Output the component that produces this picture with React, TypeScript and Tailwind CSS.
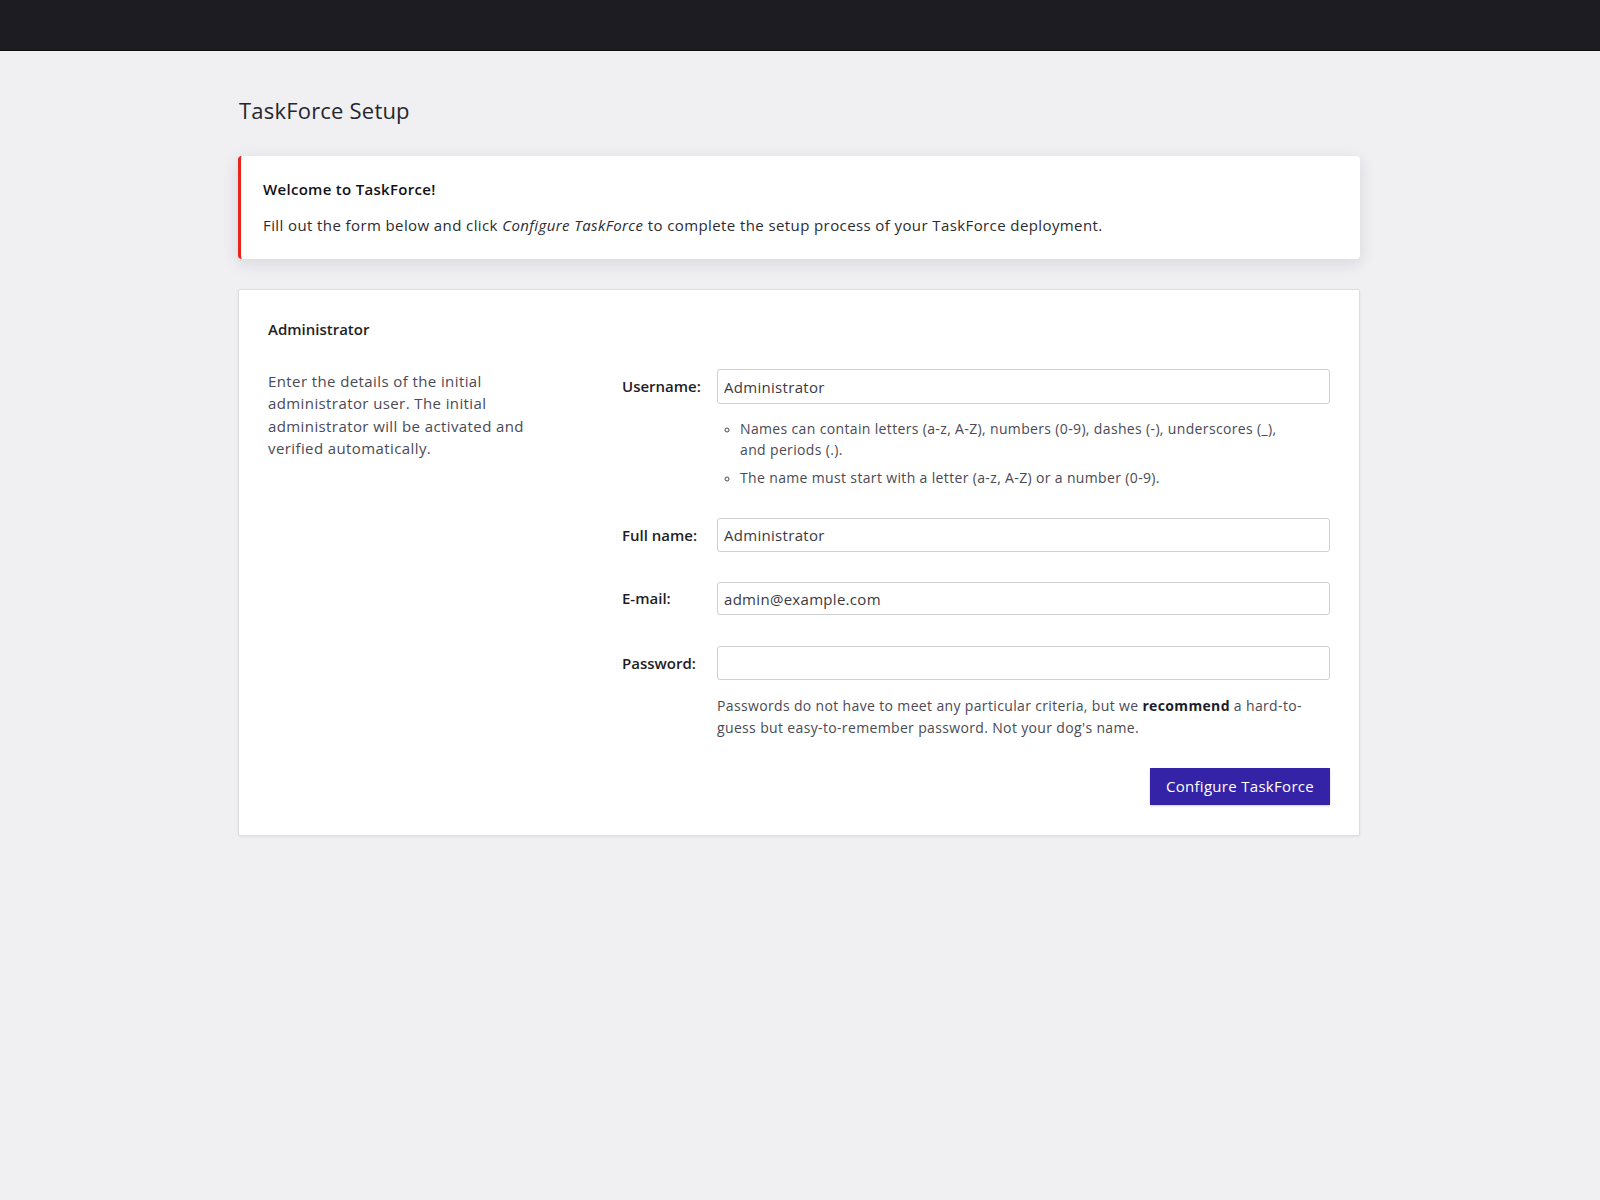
export default function App() {
  const font = { fontFamily: "'Open Sans', 'Noto Sans', sans-serif" };

  return (
    <div className="min-h-screen w-full bg-[#f0f0f3] text-[#2b2b33]" style={font}>
      <div className="h-[51px] w-full bg-[#1c1c22] border-b border-[#0d0d10]" />

      <main className="w-[1122px] ml-[238px] pt-[44px]">
        <h1 className="text-[22px] font-normal text-[#26262e] leading-[30px] mb-[31px] pl-[1px] tracking-[0.2px]">TaskForce Setup</h1>

        <div className="bg-white rounded-[4px] border-l-[3px] border-[#e8231a] shadow-[0_4px_16px_rgba(30,30,60,0.12)] px-[22px] pt-[21px] pb-[22px] mb-[30px]">
          <h2 className="text-[15px] font-semibold text-[#111118] leading-[24px] mb-[12px] tracking-[0.3px]">Welcome to TaskForce!</h2>
          <p className="text-[15px] text-[#2b2b33] leading-[24px] tracking-[0.4px]">
            Fill out the form below and click <em>Configure TaskForce</em> to complete the setup process of your TaskForce deployment.
          </p>
        </div>

        <section className="bg-white border border-[#dcdce2] rounded-[2px] shadow-[0_1px_3px_rgba(0,0,0,0.06)] px-[29px] pt-[27px] pb-[30px]">
          <h3 className="text-[15px] font-semibold text-[#1e1e26] leading-[24px] mb-[28px]">Administrator</h3>

          <div className="grid grid-cols-3">
            <p className="text-[15px] leading-[22.4px] text-[#4a4a55] pr-[80px] pt-[1px] tracking-[0.4px]">
              Enter the details of the initial administrator user. The initial administrator will be activated and verified automatically.
            </p>

            <div className="col-span-2 flex flex-col">
              <div className="flex items-center">
                <label className="w-[95px] text-[15px] font-semibold text-[#1e1e26]">Username:</label>
                <input
                  defaultValue="Administrator"
                  className="flex-1 h-[35px] border border-[#cfcfd6] rounded-[3px] px-[6px] text-[15px] text-[#3a3a44] outline-none tracking-[0.3px]"
                  style={font}
                />
              </div>
              <ul className="ml-[95px] mt-[14px] pl-[23px] pr-[45px] list-[circle] text-[14px] leading-[21px] text-[#4a4a55] marker:text-[12px] tracking-[0.35px]">
                <li className="mb-[7px]">Names can contain letters (a-z, A-Z), numbers (0-9), dashes (-), underscores (_), and periods (.).</li>
                <li>The name must start with a letter (a-z, A-Z) or a number (0-9).</li>
              </ul>

              <div className="flex items-center mt-[30px]">
                <label className="w-[95px] text-[15px] font-semibold text-[#1e1e26]">Full name:</label>
                <input
                  defaultValue="Administrator"
                  className="flex-1 h-[34px] border border-[#cfcfd6] rounded-[3px] px-[6px] text-[15px] text-[#3a3a44] outline-none tracking-[0.3px]"
                  style={font}
                />
              </div>

              <div className="flex items-center mt-[30px]">
                <label className="w-[95px] text-[15px] font-semibold text-[#1e1e26]">E-mail:</label>
                <input
                  defaultValue="admin@example.com"
                  className="flex-1 h-[33px] border border-[#cfcfd6] rounded-[3px] px-[6px] text-[15px] text-[#3a3a44] outline-none tracking-[0.3px]"
                  style={font}
                />
              </div>

              <div className="flex items-center mt-[31px]">
                <label className="w-[95px] text-[15px] font-semibold text-[#1e1e26]">Password:</label>
                <input
                  type="password"
                  className="flex-1 h-[34px] border border-[#cfcfd6] rounded-[3px] px-[6px] text-[15px] outline-none"
                />
              </div>
              <p className="ml-[95px] mt-[15px] text-[14px] leading-[21.5px] text-[#4a4a55] pr-[10px] tracking-[0.35px]">
                Passwords do not have to meet any particular criteria, but we <strong className="font-bold text-[#1e1e26]">recommend</strong> a hard-to-guess but easy-to-remember password. Not your dog's name.
              </p>

              <div className="flex justify-end mt-[30px]">
                <button className="h-[37px] w-[180px] bg-[#3423a6] text-white text-[15px] tracking-[0.3px] shadow-[0_1px_2px_rgba(0,0,0,0.2)]" style={font}>
                  Configure TaskForce
                </button>
              </div>
            </div>
          </div>
        </section>
      </main>
    </div>
  );
}
